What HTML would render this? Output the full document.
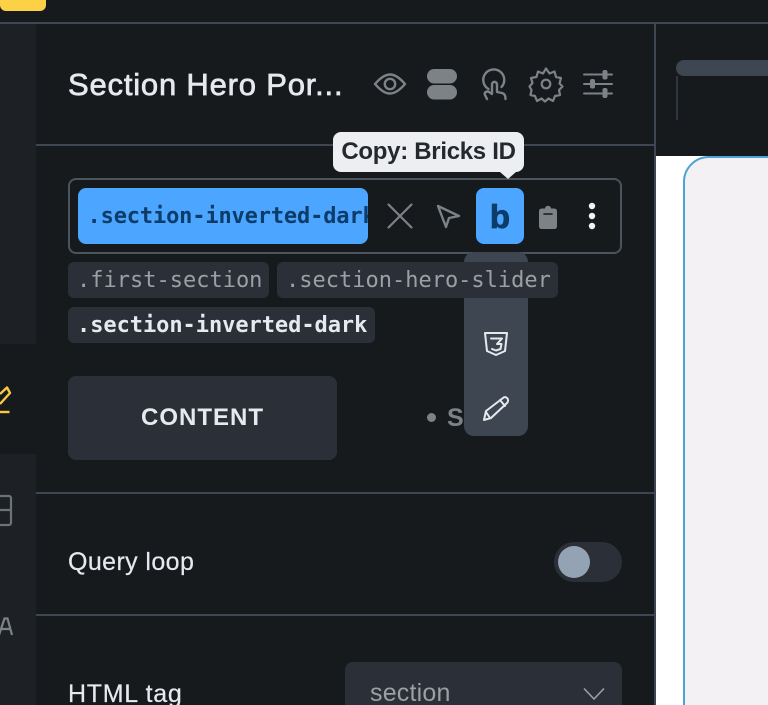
<!DOCTYPE html>
<html><head><meta charset="utf-8">
<style>
html,body{margin:0;padding:0;background:#171a1d;width:768px;height:705px;overflow:hidden}
#w{width:768px;height:705px;overflow:hidden;position:relative;font-family:"Liberation Sans",sans-serif}
.a{position:absolute;box-sizing:border-box;white-space:nowrap}
.m{font-family:"DejaVu Sans Mono","Liberation Mono",monospace;font-size:22px;height:36px;padding:0 9px;border-radius:6px;background:#2b3038;color:#9aa0a6}
.l{background:#3e4751}
svg{position:absolute;overflow:visible}
</style></head>
<body><div id="w">
<div class="a" style="left:0;top:-10px;width:46px;height:21px;background:#fdd145;border-radius:6px"></div>
<div class="a l" style="left:0;top:22px;width:768px;height:2px"></div>
<div class="a" style="left:0;top:24px;width:36px;height:320px;background:#1d2125"></div>
<div class="a" style="left:0;top:344px;width:36px;height:110px;background:#171a1d"></div>
<div class="a" style="left:0;top:454px;width:36px;height:251px;background:#1d2125"></div>
<div class="a l" style="left:36px;top:144px;width:620px;height:2px"></div>
<div class="a l" style="left:36px;top:492px;width:620px;height:2px"></div>
<div class="a l" style="left:36px;top:614px;width:620px;height:2px"></div>
<div class="a l" style="left:654px;top:24px;width:2px;height:681px"></div>

<div class="a" style="left:68px;top:66px;font-size:31px;line-height:38px;color:#e6e9ed;letter-spacing:.8px;-webkit-text-stroke:.7px #e6e9ed">Section Hero Por...</div>

<svg style="left:0;top:0" width="768" height="705" fill="none">
<g stroke="#7d8286" stroke-width="2.4" stroke-linecap="round" stroke-linejoin="round">
<path d="M375 84C381 77 386 74.500 390 74.500C394 74.500 399 77 405 84C399 91 394 93.500 390 93.500C386 93.500 381 91 375 84Z"/>
<circle cx="390" cy="84" r="5.200"/>
<path d="M488.500 89A10.500 10.500 0 1 1 501.500 87"/>
<path d="M492 93V84.500C492 81 497 81 497 84.500V92L502 93C505 94 505.500 96 505.500 99M492 94L489 92C486 90.500 484 93 485 95L487 99"/>
<path d="M546 68.500L549.500 73.500L554.500 71.500L556 77L561 78L559.500 83.500L562.500 86.500L559 90L560 95L555 96L553 101L548.500 98.500L545 101.500L541.500 98.500L537 101L535 96L530.500 95L531.500 90L529.500 86.500L532.500 83L531 78L536.500 77L538 71.500L543 73.500Z" stroke-width="2.200"/>
<circle cx="546" cy="84" r="4.300" stroke-width="2.200"/>
<path d="M584 74.500H612M584 84H612M584 93.500H612" stroke-width="2"/>
</g>
<g fill="#7d8286">
<rect x="427" y="69" width="30" height="14.500" rx="7.200"/>
<rect x="427" y="85" width="30" height="14.500" rx="7.200"/>
<rect x="602.500" y="70" width="5" height="9.500" rx="2"/>
<rect x="590" y="79" width="5" height="9.500" rx="2"/>
<rect x="602.500" y="88" width="5" height="10" rx="2"/>
</g>
<g stroke="#7d8286" stroke-width="2.200" stroke-linejoin="round" stroke-linecap="round">
<path d="M388.500 204.500L411.500 227.500M411.500 204.500L388.500 227.500"/>
<path d="M438 206L459 216L449 218L446 227Z" stroke-width="2.400"/>
</g>
</svg>

<div class="a" style="left:68px;top:178px;width:554px;height:76px;border:2px solid #4b535c;border-radius:8px"></div>
<div class="a" style="left:78px;top:188px;width:290px;height:56px;background:#4ca5ff;border-radius:8px;overflow:hidden;font:bold 22px/58px 'DejaVu Sans Mono',monospace;color:#0c3c69;padding-left:9.500px;letter-spacing:-.15px">.section-inverted-dark</div>
<div class="a" style="left:476px;top:188px;width:48px;height:56px;background:#4ca5ff;border-radius:8px"></div>
<div class="a" style="left:476px;top:188px;width:48px;height:56px;text-align:center;font:bold 33px/57px 'Liberation Sans',sans-serif;color:#0c3c69;-webkit-text-stroke:.8px #0c3c69">b</div>

<svg style="left:0;top:0" width="768" height="705" fill="none">
<path d="M542 208.500H545C545 205 551 205 551 208.500H554C556 208.500 557 209.500 557 211.500V226C557 228 556 229 554 229H542C540 229 539 228 539 226V211.500C539 209.500 540 208.500 542 208.500Z" fill="#7d8286"/>
<path d="M544 214H552" stroke="#171a1d" stroke-width="1.600" stroke-linecap="round"/>
<circle cx="592" cy="206" r="3.200" fill="#f1f3f5"/><circle cx="592" cy="216" r="3.200" fill="#f1f3f5"/><circle cx="592" cy="226" r="3.200" fill="#f1f3f5"/>
</svg>

<div class="a" style="left:464px;top:252px;width:64px;height:184px;background:#3e4751;border-radius:10px"></div>

<div class="a m" style="left:68px;top:262px;width:201px;line-height:37px">.first-section</div>
<div class="a m" style="left:277px;top:262px;width:281px;line-height:37px">.section-hero-slider</div>
<div class="a m" style="left:68px;top:307px;width:307px;color:#e6e9ed;font-weight:bold;line-height:38px;letter-spacing:-.05px">.section-inverted-dark</div>

<svg style="left:0;top:0" width="768" height="705" fill="none">
<g stroke="#e6e9ed" stroke-width="2" stroke-linejoin="round" stroke-linecap="round">
<path d="M485 333H507L505 351L496 355L487 351Z"/>
<path d="M491 338.500H502L497 344H501.500L500.500 349L496 350.500L492 349"/>
<path d="M484 420L486 411L503 398C506 395 510 400 507 403L491 418Z"/>
<path d="M486 412L490 418M500 400L505 406"/>
</g>
</svg>

<div class="a" style="left:68px;top:376px;width:269px;height:84px;background:#2b3038;border-radius:8px;text-align:center;font:bold 24px/84px 'Liberation Sans',sans-serif;letter-spacing:1px;color:#e6e9ed">CONTENT</div>
<div class="a" style="left:427px;top:413px;width:9px;height:9px;border-radius:50%;background:#7d8286"></div>
<div class="a" style="left:447px;top:402px;width:17px;height:32px;overflow:hidden;font:bold 25px/32px 'Liberation Sans',sans-serif;color:#7d8286">S</div>

<div class="a" style="left:333px;top:132px;width:191px;height:40px;background:#eceef2;border-radius:8px;text-align:center;font:bold 24px/39px 'Liberation Sans',sans-serif;color:#25282d;letter-spacing:-.3px">Copy: Bricks ID</div>
<div class="a" style="left:500px;top:172px;width:0;height:0;border:8px solid transparent;border-top:7px solid #eceef2;border-bottom:0"></div>

<svg style="left:0;top:0" width="768" height="705" fill="none">
<path d="M0 394L7 387.500L10 393L0 404" stroke="#f8c93f" stroke-width="2.400" stroke-linejoin="round"/>
<path d="M-1 412H9.500" stroke="#f8c93f" stroke-width="2.400"/>
<path d="M0 496H9C10 496 11 497 11 498V523C11 524 10 525 9 525H0M0 510H11" stroke="#6d7277" stroke-width="2.200"/>
<path d="M-1 635L4.500 618.500H7.500L12 635M1 629H10.500" stroke="#7d8286" stroke-width="2.200"/>
</svg>

<div class="a" style="left:68px;top:547px;font-size:25px;line-height:30px;color:#e6e9ed;letter-spacing:.4px;-webkit-text-stroke:.2px #e6e9ed">Query loop</div>
<div class="a" style="left:554px;top:542px;width:68px;height:40px;border-radius:20px;background:#2b3038"></div>
<div class="a" style="left:558px;top:546px;width:32px;height:32px;border-radius:50%;background:#94a3b3"></div>

<div class="a" style="left:68px;top:679px;font-size:25px;line-height:30px;color:#e6e9ed;letter-spacing:.7px;-webkit-text-stroke:.2px #e6e9ed">HTML tag</div>
<div class="a" style="left:345px;top:662px;width:277px;height:60px;border-radius:8px;background:#2b3038;padding-left:25px;font-size:25px;line-height:63px;color:#9aa0a6;letter-spacing:.2px">section</div>
<svg style="left:0;top:0" width="768" height="705" fill="none"><path d="M584 688.500L594 699L604 688.500" stroke="#9aa0a6" stroke-width="1.600"/></svg>

<div class="a" style="left:656px;top:156px;width:112px;height:549px;background:#fff"></div>
<div class="a" style="left:683px;top:156px;width:100px;height:570px;background:#f3f1f3;border:2px solid #4aa3d2;border-radius:26px 0 0 0"></div>
<div class="a l" style="left:676px;top:60px;width:92px;height:16px;border-radius:8px 0 0 8px"></div>
<div class="a" style="left:676px;top:76px;width:2px;height:44px;background:#30363d"></div>
</div></body></html>
